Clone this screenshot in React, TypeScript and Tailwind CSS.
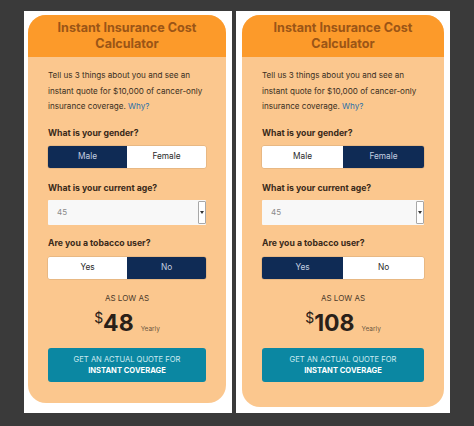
import React from 'react';

type CardProps = {
    gender: 'Male' | 'Female';
    tobacco: 'Yes' | 'No';
    price: string;
    width: string;
    height: string;
};

function Toggle({ options, active }: { options: string[]; active: string }) {
    return (
        <div className="flex h-[22px] w-full overflow-hidden rounded-[2px] shadow-[0_0_0_0.5px_rgba(0,0,0,0.15)]">
            {options.map((opt) => (
                <div
                    key={opt}
                    className={
                        opt === active
                            ? 'flex flex-1 items-center justify-center bg-[#0f2b55] text-[8.3px] text-[#c3cee0]'
                            : 'flex flex-1 items-center justify-center bg-white text-[8.3px] text-[#2b2b2b]'
                    }
                >
                    {opt}
                </div>
            ))}
        </div>
    );
}

function QuoteCard({ gender, tobacco, price, width, height }: CardProps) {
    return (
        <div className={`${width} ${height} flex flex-col overflow-hidden rounded-[18px] bg-[#fbc78e]`}>
            <div className="flex h-[42px] shrink-0 flex-col items-center justify-center bg-[#fc9a2a] text-center text-[12.6px] font-bold leading-[16px] text-[#9b5516]">
                <span>Instant Insurance Cost</span>
                <span>Calculator</span>
            </div>

            <div className="flex flex-col px-[20px]">
                <p className="mt-[11px] text-[8.1px] leading-[15.5px] text-[#3a2f22]">
                    Tell us 3 things about you and see an instant quote for $10,000 of cancer-only insurance coverage.{' '}
                    <span className="text-[#2a6fa8]">Why?</span>
                </p>

                <div className="mt-[11px] text-[8.7px] font-bold leading-[14px] text-[#3a2a1a]">What is your gender?</div>
                <div className="mt-[6px]">
                    <Toggle options={['Male', 'Female']} active={gender} />
                </div>

                <div className="mt-[13px] text-[8.7px] font-bold leading-[14px] text-[#3a2a1a]">What is your current age?</div>
                <div className="mt-[5px] flex h-[25px] items-center justify-between rounded-[1px] bg-[#f8f8f8] pl-[9px]">
                    <span className="text-[8px] text-[#8a8a8a]">45</span>
                    <div className="flex h-[23px] w-[8px] items-center justify-center rounded-[1px] border border-[#a8a8a8] bg-white">
                        <span className="block h-0 w-0 border-x-[2px] border-t-[3px] border-x-transparent border-t-[#333]" />
                    </div>
                </div>

                <div className="mt-[11px] text-[8.7px] font-bold leading-[14px] text-[#3a2a1a]">Are you a tobacco user?</div>
                <div className="mt-[7px]">
                    <Toggle options={['Yes', 'No']} active={tobacco} />
                </div>

                <div className="mt-[13px] text-center text-[8px] leading-[13px] text-[#4a3a2a]">AS LOW AS</div>
                <div className="mt-[5px] flex items-end justify-center leading-none text-[#2a2018]">
                    <span className="mb-[11px] text-[14px]">$</span>
                    <span className="text-[23px] font-bold leading-[26px]">{price}</span>
                    <span className="mb-[3px] ml-[7px] text-[6.5px] text-[#6b5640]">Yearly</span>
                </div>

                <div className="mt-[12px] flex h-[34px] flex-col items-center justify-center rounded-[3px] bg-[#0b87a2] text-[7.6px] leading-[11px]">
                    <span className="text-[#cdebf1]">GET AN ACTUAL QUOTE FOR</span>
                    <span className="font-bold text-white">INSTANT COVERAGE</span>
                </div>
            </div>
        </div>
    );
}

export default function App() {
    return (
        <div
            className="flex h-[426px] w-[474px] items-start gap-[4px] bg-[#3a3a3a] pl-[24px] pt-[11px]"
            style={{ fontFamily: 'Inter, "Liberation Sans", sans-serif' }}
        >
            <div className="h-[402px] w-[208px] bg-white pl-[4px] pt-[4px]">
                <QuoteCard gender="Male" tobacco="No" price="48" width="w-[198px]" height="h-[388px]" />
            </div>
            <div className="h-[402px] w-[214px] bg-white px-[6px] pt-[4px]">
                <QuoteCard gender="Female" tobacco="Yes" price="108" width="w-[202px]" height="h-[392px]" />
            </div>
        </div>
    );
}
